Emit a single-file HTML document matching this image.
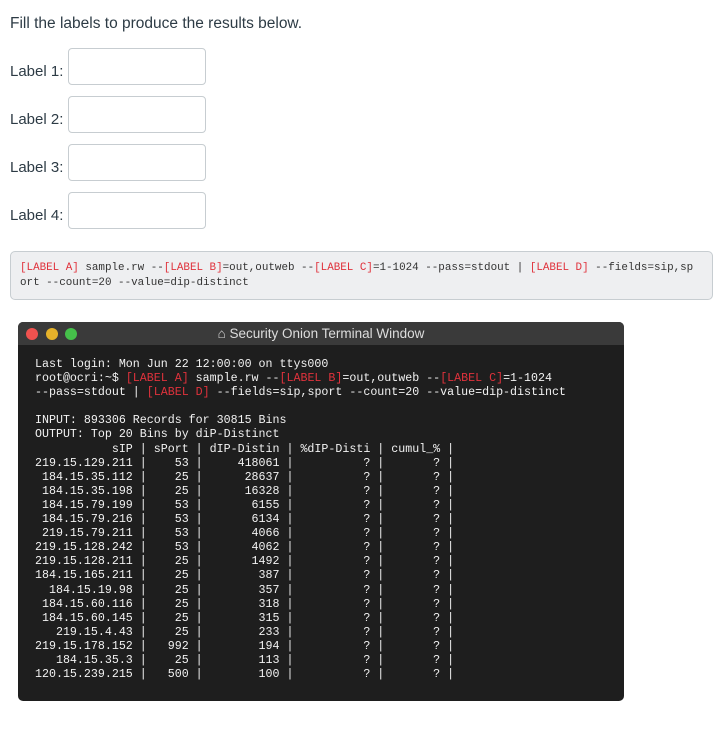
<!DOCTYPE html>
<html><head><meta charset="utf-8"><style>
*{margin:0;padding:0;box-sizing:border-box}
body{width:728px;height:737px;background:#fff;font-family:"Liberation Sans",sans-serif;color:#2d3b45;position:relative;overflow:hidden}
.h{position:absolute;left:10px;top:15px;font-size:15.5px}
.lab{position:absolute;left:10px;font-size:15px}
.inp{position:absolute;left:68px;width:138px;height:37px;border:1px solid #c7cdd1;border-radius:4px;background:#fff}
.code{position:absolute;left:10px;top:251px;width:703px;height:49px;background:#eeeff1;border:1px solid #c7cdd1;border-radius:5px;padding:9px 9px;font-family:"Liberation Mono",monospace;font-size:10.9px;line-height:15px;color:#333;white-space:pre}
.r{color:#e0323c}
.term{position:absolute;left:18px;top:322px;width:606px;height:379px;background:#1e1e1e;border-radius:5px;overflow:hidden}
.tb{height:23px;background:#3a3a3a;position:relative;color:#ddd;font-size:13.5px;text-align:center;line-height:24px}
.dot{position:absolute;top:6px;width:12px;height:12px;border-radius:50%}
pre{position:absolute;left:17px;top:36px;font-family:"Liberation Mono",monospace;font-size:11.65px;line-height:14.1px;color:#f2f2f2}
.tr{color:#e0323c}
</style></head><body>
<div class="h">Fill the labels to produce the results below.</div>
<div class="lab" style="top:63px">Label 1:</div><div class="inp" style="top:48px"></div>
<div class="lab" style="top:111px">Label 2:</div><div class="inp" style="top:96px"></div>
<div class="lab" style="top:159px">Label 3:</div><div class="inp" style="top:144px"></div>
<div class="lab" style="top:207px">Label 4:</div><div class="inp" style="top:192px"></div>
<div class="code"><span class="r">[LABEL A]</span> sample.rw --<span class="r">[LABEL B]</span>=out,outweb --<span class="r">[LABEL C]</span>=1-1024 --pass=stdout | <span class="r">[LABEL D]</span> --fields=sip,sp
ort --count=20 --value=dip-distinct</div>
<div class="term">
<div class="tb"><span class="dot" style="left:8px;background:#f0524f"></span><span class="dot" style="left:28px;background:#e5b22a"></span><span class="dot" style="left:47px;background:#45c04a"></span>&#8962; Security Onion Terminal Window</div>
<pre>Last login: Mon Jun 22 12:00:00 on ttys000
root@ocri:~$ <span class="tr">[LABEL A]</span> sample.rw --<span class="tr">[LABEL B]</span>=out,outweb --<span class="tr">[LABEL C]</span>=1-1024
--pass=stdout | <span class="tr">[LABEL D]</span> --fields=sip,sport --count=20 --value=dip-distinct

INPUT: 893306 Records for 30815 Bins
OUTPUT: Top 20 Bins by diP-Distinct
           sIP | sPort | dIP-Distin | %dIP-Disti | cumul_% |
219.15.129.211 |    53 |     418061 |          ? |       ? |
 184.15.35.112 |    25 |      28637 |          ? |       ? |
 184.15.35.198 |    25 |      16328 |          ? |       ? |
 184.15.79.199 |    53 |       6155 |          ? |       ? |
 184.15.79.216 |    53 |       6134 |          ? |       ? |
 219.15.79.211 |    53 |       4066 |          ? |       ? |
219.15.128.242 |    53 |       4062 |          ? |       ? |
219.15.128.211 |    25 |       1492 |          ? |       ? |
184.15.165.211 |    25 |        387 |          ? |       ? |
  184.15.19.98 |    25 |        357 |          ? |       ? |
 184.15.60.116 |    25 |        318 |          ? |       ? |
 184.15.60.145 |    25 |        315 |          ? |       ? |
   219.15.4.43 |    25 |        233 |          ? |       ? |
219.15.178.152 |   992 |        194 |          ? |       ? |
   184.15.35.3 |    25 |        113 |          ? |       ? |
120.15.239.215 |   500 |        100 |          ? |       ? |</pre>
</div>
</body></html>
